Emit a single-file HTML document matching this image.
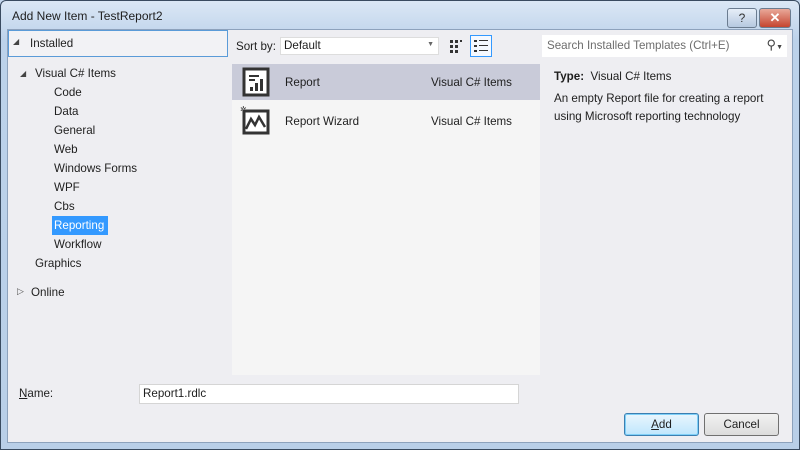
<!DOCTYPE html>
<html><head><style>
*{margin:0;padding:0;box-sizing:border-box}
body{width:800px;height:450px;overflow:hidden;font-family:"Liberation Sans",sans-serif;font-size:11.6px;color:#1e1e1e;background:#c4d7ee;position:relative}
.frame{position:absolute;left:0;top:0;width:800px;height:450px;border:1px solid #3a4b60;border-radius:6px 6px 0 0;background:linear-gradient(#dbe7f5,#bcd2ea 40px,#b9cfe8)}
.title{position:absolute;left:12px;top:9px;font-size:12px;color:#1e1e1e}
.btn{position:absolute;top:8px;height:20px;border:1px solid #6b7c90;border-radius:3px}
.client{position:absolute;left:8px;top:30px;width:784px;height:412px;background:#eeeef2;outline:1px solid #8da2bc}
.abs{position:absolute}
.tree div{position:absolute}
.list{position:absolute;left:224px;top:34px;width:308px;height:311px;background:#f5f5f5}
</style></head><body>
<div class="frame"></div>
<div class="title">Add New Item - TestReport2</div>
<div class="btn" style="left:727px;width:30px;background:linear-gradient(#e6eef8,#b6c9e0);color:#333;text-align:center;font-size:12px;line-height:18px">?</div>
<div class="btn" style="left:759px;width:32px;background:linear-gradient(#e9a99a,#c5452f);color:#fff;text-align:center;font-weight:bold;font-size:13px;line-height:18px">✕</div>
<div class="client">
  <div class="abs" style="left:0;top:0;width:220px;height:27px;border:1px solid #5a9bd8;background:#f2f2f5"></div>
  <div class="abs" style="left:5px;top:7px;font-size:8px;color:#444">◢</div>
  <div class="abs" style="left:22px;top:7px">Installed</div>
  <div class="tree">
    <div style="left:12px;top:39px;font-size:8px;color:#444">◢</div>
    <div style="left:27px;top:37px">Visual C# Items</div>
    <div style="left:46px;top:56px">Code</div>
    <div style="left:46px;top:75px">Data</div>
    <div style="left:46px;top:94px">General</div>
    <div style="left:46px;top:113px">Web</div>
    <div style="left:46px;top:132px">Windows Forms</div>
    <div style="left:46px;top:151px">WPF</div>
    <div style="left:46px;top:170px">Cbs</div>
    <div style="left:44px;top:186px;width:56px;height:19px;background:#3399ff"></div>
    <div style="left:46px;top:189px;color:#fff">Reporting</div>
    <div style="left:46px;top:208px">Workflow</div>
    <div style="left:27px;top:227px">Graphics</div>
    <div style="left:9px;top:256px;font-size:9px;color:#555">▷</div>
    <div style="left:23px;top:256px">Online</div>
  </div>
  <div class="abs" style="left:228px;top:10px">Sort by:</div>
  <div class="abs" style="left:272px;top:7px;width:159px;height:18px;background:#fff;border:1px solid #ddd;padding:1px 3px">Default<span style="position:absolute;right:4px;top:3px;font-size:7px;color:#666">▼</span></div>
  <svg class="abs" style="left:440px;top:8px" width="16" height="16"><g fill="#333"><rect x="2" y="2" width="3" height="3"/><rect x="7" y="2" width="3" height="3"/><rect x="12" y="2" width="2" height="2"/><rect x="2" y="7" width="3" height="3"/><rect x="7" y="7" width="3" height="3"/><rect x="2" y="12" width="3" height="3"/><rect x="7" y="12" width="3" height="3"/></g></svg>
  <div class="abs" style="left:462px;top:5px;width:22px;height:22px;border:1px solid #3399ff;background:#f5f9ff"></div>
  <svg class="abs" style="left:466px;top:9px" width="14" height="14"><g fill="#333"><rect x="0" y="1" width="3" height="2"/><rect x="5" y="1" width="9" height="1"/><rect x="0" y="6" width="3" height="2"/><rect x="5" y="6" width="9" height="1"/><rect x="0" y="11" width="3" height="2"/><rect x="5" y="11" width="9" height="1"/></g></svg>
  <div class="list">
    <div class="abs" style="left:0;top:0;width:308px;height:36px;background:#c9cbd9"></div>
    <svg class="abs" style="left:10px;top:3px" width="28" height="30"><rect x="2" y="2" width="24" height="26" fill="#fff" stroke="#333" stroke-width="3"/><g fill="#333"><rect x="7" y="8" width="10" height="2"/><rect x="7" y="12" width="6" height="2"/><rect x="8" y="20" width="3" height="4"/><rect x="13" y="16" width="3" height="8"/><rect x="18" y="12" width="3" height="12"/></g></svg>
    <div class="abs" style="left:53px;top:12px">Report</div>
    <div class="abs" style="left:199px;top:12px">Visual C# Items</div>
    <svg class="abs" style="left:8px;top:41px" width="30" height="30"><rect x="4" y="6" width="24" height="22" fill="#fff" stroke="#333" stroke-width="3"/><path d="M6 24 L11 14 L15 20 L19 12 L25 22" fill="none" stroke="#333" stroke-width="2.5"/><text x="0" y="7" font-size="8" fill="#333">✲</text></svg>
    <div class="abs" style="left:53px;top:51px">Report Wizard</div>
    <div class="abs" style="left:199px;top:51px">Visual C# Items</div>
  </div>
  <div class="abs" style="left:534px;top:5px;width:245px;height:22px;background:#fff;color:#6d6d6d;padding:4px 5px">Search Installed Templates (Ctrl+E)<span style="position:absolute;right:4px;top:2px;color:#444;font-size:13px">⚲<span style="font-size:7px">▼</span></span></div>
  <div class="abs" style="left:546px;top:40px"><b>Type:</b>&nbsp; Visual C# Items</div>
  <div class="abs" style="left:546px;top:60px;line-height:18px">An empty Report file for creating a report<br>using Microsoft reporting technology</div>
  <div class="abs" style="left:11px;top:357px"><u>N</u>ame:</div>
  <div class="abs" style="left:131px;top:354px;width:380px;height:20px;background:#fff;border:1px solid #d5d5d5;padding:2px 3px">Report1.rdlc</div>
  <div class="abs" style="left:616px;top:383px;width:75px;height:23px;border:1px solid #3c7fb1;border-radius:3px;background:linear-gradient(#eaf6fd,#bee6fd);text-align:center;line-height:21px;box-shadow:inset 0 0 0 1px #7fd0f8"><u>A</u>dd</div>
  <div class="abs" style="left:696px;top:383px;width:75px;height:23px;border:1px solid #707070;border-radius:3px;background:linear-gradient(#f2f2f2,#dcdcdc);text-align:center;line-height:21px">Cancel</div>
</div>
</body></html>
